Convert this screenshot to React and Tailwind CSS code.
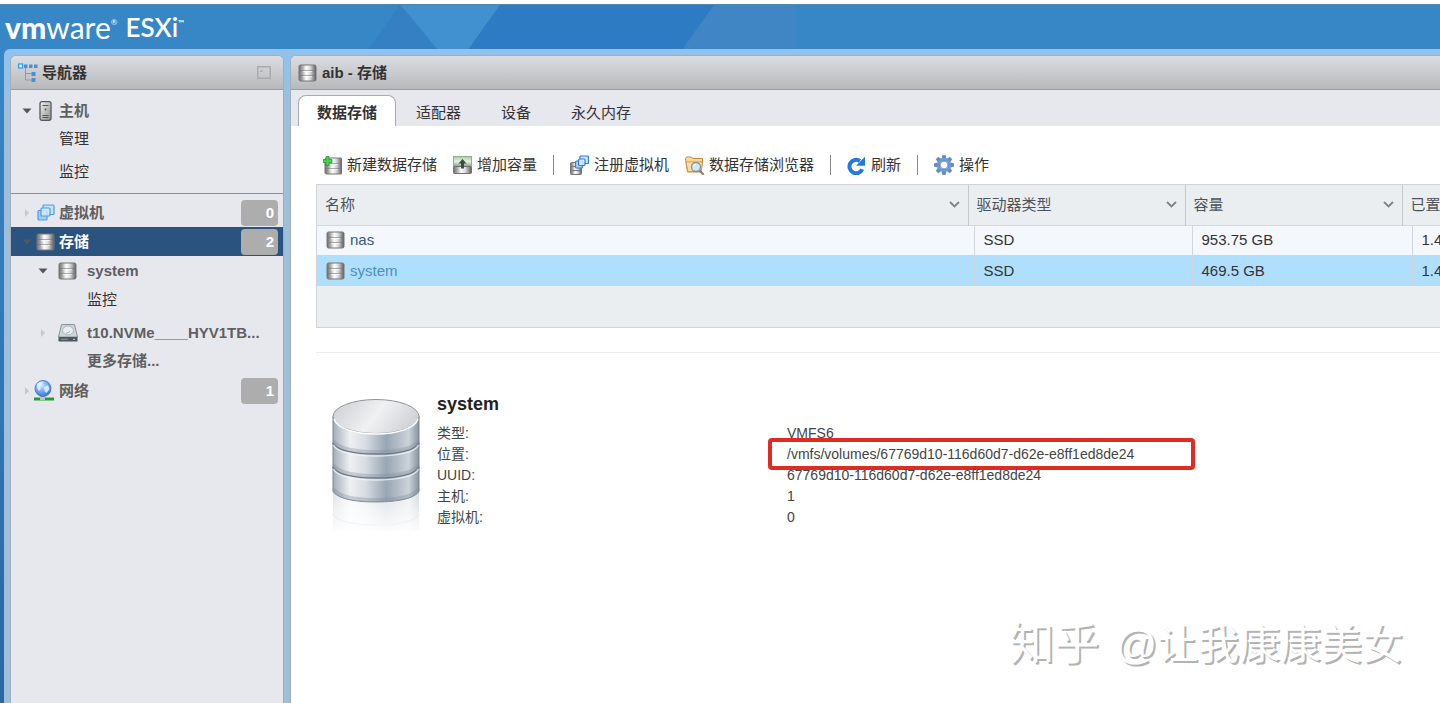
import { useState } from "react";

const TABS = ["数据存储", "适配器", "设备", "永久内存"];

const ROWS = [
  { name: "nas", drive: "SSD", capacity: "953.75 GB", used: "1.41 GB" },
  { name: "system", drive: "SSD", capacity: "469.5 GB", used: "1.43 GB" },
];

const DETAILS = [
  { label: "类型:", value: "VMFS6" },
  { label: "位置:", value: "/vmfs/volumes/67769d10-116d60d7-d62e-e8ff1ed8de24", marked: true },
  { label: "UUID:", value: "67769d10-116d60d7-d62e-e8ff1ed8de24" },
  { label: "主机:", value: "1" },
  { label: "虚拟机:", value: "0" },
];

// Gradients shared by all icons
function IconDefs() {
  return (
    <svg className="absolute w-0 h-0" aria-hidden="true">
      <defs>
        <linearGradient id="metal" x1="0" x2="1" y1="0" y2="0">
          <stop offset="0" stopColor="#6e6e6e" />
          <stop offset="0.2" stopColor="#a8a8a8" />
          <stop offset="0.42" stopColor="#ffffff" />
          <stop offset="0.65" stopColor="#dcdcdc" />
          <stop offset="1" stopColor="#5c5c5c" />
        </linearGradient>
        <linearGradient id="greenMetal" x1="0" x2="0" y1="0" y2="1">
          <stop offset="0" stopColor="#9ccfa0" />
          <stop offset="0.5" stopColor="#e4efe4" />
          <stop offset="1" stopColor="#8f9a90" />
        </linearGradient>
        <linearGradient id="server" x1="0" x2="1" y1="0" y2="1">
          <stop offset="0" stopColor="#f2f2f0" />
          <stop offset="1" stopColor="#8d8f8c" />
        </linearGradient>
        <linearGradient id="folder" x1="0" x2="0" y1="0" y2="1">
          <stop offset="0" stopColor="#fbe3a8" />
          <stop offset="1" stopColor="#e0a553" />
        </linearGradient>
        <radialGradient id="globe" cx="0.4" cy="0.3" r="0.8">
          <stop offset="0" stopColor="#d5ebff" />
          <stop offset="0.5" stopColor="#6fa8ee" />
          <stop offset="1" stopColor="#2f63c4" />
        </radialGradient>
        <linearGradient id="side" x1="0" x2="1" y1="0" y2="0">
          <stop offset="0" stopColor="#a3adb8" />
          <stop offset="0.2" stopColor="#eef1f4" />
          <stop offset="0.38" stopColor="#d6dce2" />
          <stop offset="0.62" stopColor="#98a5b3" />
          <stop offset="0.88" stopColor="#ccd3da" />
          <stop offset="1" stopColor="#8592a0" />
        </linearGradient>
        <linearGradient id="lid" x1="0" x2="1" y1="0.3" y2="0.6">
          <stop offset="0" stopColor="#cfd1d4" />
          <stop offset="0.5" stopColor="#f0f1f2" />
          <stop offset="1" stopColor="#cdd0d3" />
        </linearGradient>
        <linearGradient id="fade" x1="0" x2="0" y1="0" y2="1">
          <stop offset="0" stopColor="#ffffff" stopOpacity="0.65" />
          <stop offset="1" stopColor="#ffffff" stopOpacity="1" />
        </linearGradient>
      </defs>
    </svg>
  );
}

function Stack() {
  return (
    <g>
      <rect x="1" y="1" width="17" height="16" rx="1.5" fill="url(#metal)" stroke="#777" />
      <path d="M1.5 6.5h16M1.5 11.5h16" stroke="#6f6f6f" strokeOpacity="0.55" />
      <path d="M5 7.5h9M5 12.5h9" stroke="#fff" strokeOpacity="0.6" />
    </g>
  );
}

function StorageIcon() {
  return <svg className="w-[19px] h-[18px] shrink-0" viewBox="0 0 19 18"><Stack /></svg>;
}

function NewStorageIcon() {
  return (
    <svg className="w-[19px] h-[19px] shrink-0" viewBox="0 0 19 19">
      <g transform="translate(1 1)"><Stack /></g>
      <path d="M3 .5h3v3h3v3H6v3H3v-3H0v-3h3z" fill="#4bd04b" stroke="#2a9a35" strokeWidth="0.8" />
    </svg>
  );
}

function IncreaseIcon() {
  return (
    <svg className="w-[19px] h-[18px] shrink-0" viewBox="0 0 19 18">
      <rect x="0.5" y="0.5" width="18" height="10" fill="url(#greenMetal)" stroke="#8fae92" />
      <rect x="0.5" y="10.5" width="18" height="7" rx="1" fill="url(#metal)" stroke="#707070" />
      <path d="M9.5 3l4 4.500H11v5H8v-5H5.500z" fill="#3f4a42" />
    </svg>
  );
}

function VmIcon() {
  return (
    <svg className="w-[18px] h-[17px] shrink-0" viewBox="0 0 18 17">
      <g stroke="#4a9be0" strokeWidth="1.2">
        <rect x="6" y="1" width="11" height="9.500" rx="1" fill="#c4e3fb" />
        <rect x="1" y="6.500" width="9" height="9.500" rx="1" fill="#9bd0f8" />
        <rect x="4" y="4" width="9" height="8" rx="1" fill="#d9eefd" fillOpacity="0.75" />
      </g>
    </svg>
  );
}

function RegisterVmIcon() {
  return (
    <svg className="w-[19px] h-5 shrink-0" viewBox="0 0 19 20">
      <rect x="0.5" y="7.5" width="11" height="12" rx="1" fill="url(#metal)" stroke="#777" />
      <path d="M1 11.5h10M1 15.5h10" stroke="#777" />
      <g stroke="#2f7fdb" strokeWidth="1.2">
        <rect x="10" y="1" width="8.500" height="7.500" rx="1" fill="#c9e5fc" />
        <rect x="5.500" y="6" width="7" height="7" rx="1" fill="#a7d3fa" />
        <rect x="8.500" y="4" width="6.500" height="6.500" rx="1" fill="#e5f3fe" fillOpacity="0.8" />
      </g>
    </svg>
  );
}

function BrowserIcon() {
  return (
    <svg className="w-[19px] h-[19px] shrink-0" viewBox="0 0 19 19">
      <path d="M.5 2.500l1-1.500h5l1 1.500h10v4l-1.500 9.500H2.500L1 6.500z" fill="url(#folder)" stroke="#c58a3e" />
      <path d="M1 6h16.500l-1.500 9.500h-13z" fill="#fae0a2" stroke="#cd9548" strokeWidth="0.8" />
      <path d="M14 14l4 4" stroke="#8c7f78" strokeWidth="2.2" strokeLinecap="round" />
      <circle cx="11" cy="11" r="4.5" fill="#cfe6f7" stroke="#8294a6" strokeWidth="1.3" />
      <path d="M8.500 10.500a2.700 2.700 0 0 1 2.500-2.200" stroke="#fff" fill="none" />
    </svg>
  );
}

function RefreshIcon() {
  return (
    <svg className="w-[19px] h-[19px] shrink-0" viewBox="0 0 19 19">
      <path d="M15.300 13.200A6.700 6.700 0 1 1 13 5" fill="none" stroke="#2379dc" strokeWidth="4" />
      <path d="M18 .8v9H9z" fill="#2379dc" />
    </svg>
  );
}

function GearIcon() {
  return (
    <svg className="w-5 h-5 shrink-0" viewBox="0 0 20 20">
      <g fill="#5b88c6" stroke="#3f6aa8" strokeWidth="0.5">
        {[0, 45, 90, 135, 180, 225, 270, 315].map(a => (
          <path key={a} d="M8 4l.6-3.600h2.800L12 4z" transform={`rotate(${a} 10 10)`} />
        ))}
      </g>
      <circle cx="10" cy="10" r="5.6" fill="none" stroke="#6f9ad3" strokeWidth="3.2" />
      <circle cx="10" cy="10" r="3.9" fill="#fff" stroke="#456fae" strokeWidth="0.7" />
    </svg>
  );
}

function HostIcon() {
  return (
    <svg className="w-[13px] h-5 shrink-0" viewBox="0 0 13 20">
      <rect x="1" y="0.7" width="11" height="18.6" rx="2" fill="url(#server)" stroke="#55575a" strokeWidth="1.3" />
      <path d="M3.500 4.500h6M3.500 14.500h6M3.500 16.500h6" stroke="#555" />
      <circle cx="6.5" cy="8.5" r="0.9" fill="#555" />
    </svg>
  );
}

function DiskIcon() {
  return (
    <svg className="w-5 h-[18px] shrink-0" viewBox="0 0 20 18">
      <path d="M3.500.5h13l3 12.500H.5z" fill="#cdd6da" stroke="#8a9398" />
      <ellipse cx="10" cy="6.5" rx="5.5" ry="4.5" fill="#e8eef1" stroke="#a9b5bb" />
      <path d="M8 9.500l4-2" stroke="#a2afb5" />
      <rect x="0.5" y="13" width="19" height="4.5" rx="0.5" fill="#4d575d" />
      <path d="M3 15.300h7" stroke="#8c979d" />
      <path d="M15 15.300h2" stroke="#b7e07a" />
    </svg>
  );
}

function NetworkIcon() {
  return (
    <svg className="w-5 h-[21px] shrink-0" viewBox="0 0 20 21">
      <path d="M0 19h20" stroke="#22a025" strokeWidth="3" />
      <path d="M6 16h5v4H6z" fill="#b8c4cd" />
      <circle cx="9" cy="8.5" r="8" fill="url(#globe)" stroke="#3d6fc5" strokeWidth="0.8" />
      <path d="M3 4c2-2 4-2.500 6-2l-1 3-2 1 1 2-2 3-2-3zM10 7l4-2 1.500 4-3 4-2-2z" fill="#e2f2ff" fillOpacity="0.85" />
    </svg>
  );
}

function NavigatorIcon() {
  return (
    <svg className="w-5 h-5 shrink-0" viewBox="0 0 20 20">
      <path d="M7.500 5v12h6M7.500 10.500h6" fill="none" stroke="#8b97a5" />
      <rect x="0.6" y="1" width="4" height="4" fill="#d9f0ff" stroke="#2d9bea" strokeWidth="1.2" />
      <path d="M6 1.500h3.500V5H6zM11 1.500h3.500V5H11zM16 1.500h3.500V5H16zM13.500 9h4v4h-4zM13.500 15h4v4h-4z" fill="#4a8fd6" />
    </svg>
  );
}

function Arrow({ open, faint }) {
  return (
    <svg className="w-[10px] h-[10px] shrink-0" viewBox="0 0 10 10">
      <path d={open ? "M.5 2.500h9L5 7.500z" : "M3 1l4 4-4 4z"} fill={open ? (faint ? "#4c5a68" : "#555") : "#c6c7cc"} />
    </svg>
  );
}

function BigStorage() {
  return (
    <svg className="w-[88px] h-[137px] shrink-0" viewBox="0 0 88 137">
      {/* reflection */}
      <path d="M1 93v40h86V93c-2 8-20 12-43 12S3 101 1 93z" fill="url(#side)" />
      <path d="M1 116c3 7 20 11 43 11s40-4 43-11" fill="none" stroke="#75808c" strokeWidth="1.5" />
      <rect x="0" y="92" width="88" height="45" fill="url(#fade)" />

      <path d="M1 18v75c3 7 20 11 43 11s40-4 43-11V18z" fill="url(#side)" stroke="#7d858e" />
      {/* shade at the lower edge of each band, highlight at the upper edge of the next */}
      <path d="M1.500 43c3 7 20 11 42.500 11s39.500-4 42.500-11M1.500 67c3 7 20 11 42.500 11s39.500-4 42.500-11M1.500 91c3 7 20 11 42.500 11s39.500-4 42.500-11" fill="none" stroke="#7f8c9a" strokeOpacity="0.35" strokeWidth="4" />
      <path d="M1 45c3 7 20 11 43 11s40-4 43-11M1 69c3 7 20 11 43 11s40-4 43-11" fill="none" stroke="#6f7a86" strokeWidth="1.5" />
      <path d="M1.500 47c3 7 20 11 42.500 11s39.500-4 42.500-11M1.500 71c3 7 20 11 42.500 11s39.500-4 42.500-11" fill="none" stroke="#f4f7f9" strokeOpacity="0.75" strokeWidth="1.5" />
      <ellipse cx="44" cy="18.5" rx="43" ry="17" fill="url(#lid)" stroke="#8e959c" />
      <path d="M2 21c3 9 20 15 42 15s39-6 42-15" fill="none" stroke="#fff" strokeWidth="1.5" />
    </svg>
  );
}

const TOOLS = [
  { label: "新建数据存储", icon: NewStorageIcon },
  { label: "增加容量", icon: IncreaseIcon },
  null,
  { label: "注册虚拟机", icon: RegisterVmIcon },
  { label: "数据存储浏览器", icon: BrowserIcon },
  null,
  { label: "刷新", icon: RefreshIcon },
  null,
  { label: "操作", icon: GearIcon },
];

function Badge({ children }) {
  return (
    <span className="ml-auto mr-[5px] w-[37px] h-[26px] rounded bg-[#adadad] text-white font-bold flex items-center justify-end pr-1">
      {children}
    </span>
  );
}

function Header() {
  return (
    <header className="relative h-[45px] mt-1 bg-[#3786c6] border-t border-[#4c86b5] overflow-hidden flex">
      <svg className="absolute left-[360px] top-0 w-[480px] h-[45px]" viewBox="0 0 480 45" aria-hidden="true">
        <path d="M40 0L8 45h70z" fill="#3480c2" />
        <path d="M41 0h99l-32 45H78z" fill="#4191d1" />
        <path d="M140 0h214l-32 45H108z" fill="#2c7bc3" />
        <path d="M354 0h82v45H322z" fill="#4085c4" />
      </svg>
      <h1 className="relative pl-[5px] text-white flex items-center gap-2 font-[Lato]">
        <span className="text-[30px] leading-10">
          <span className="font-black">vm</span>ware<sup className="text-[8px] -top-[14px]">®</sup>
        </span>
        <span className="text-[26px] leading-10 font-semibold">ESXi<sup className="text-[8px] -top-[11px]">™</sup></span>
      </h1>
    </header>
  );
}

function Sidebar() {
  const row = "h-[29px] flex items-center";
  return (
    <aside className="w-[274px] shrink-0 rounded-t-md bg-[#e7e8ee] border-x border-t border-[#a5adb8] overflow-hidden">
      <div className="h-[34px] pl-[7px] pr-3 flex items-center gap-1 bg-linear-to-b from-[#dcdde0] to-[#b8b9bd] border-b border-[#999ba1]">
        <NavigatorIcon />
        <h2 className="font-bold text-[#333]">导航器</h2>
        <button aria-label="收起" className="ml-auto">
          <svg className="w-[14px] h-[13px]" viewBox="0 0 14 13">
            <path d="M.7.7h12.600v11.600H.7z" fill="none" stroke="#aaa" strokeWidth="1.4" />
            <path d="M5.500 3v3H2.500z" fill="#aaa" />
          </svg>
        </button>
      </div>
      <nav className="text-[#5f5f5f]">
        <div className="pt-[6px] pb-[7px] border-b border-[#8d8f96]">
          <div className={`${row} pl-[11px]`}>
            <Arrow open />
            <span className="w-[27px] flex justify-center"><HostIcon /></span>
            <a href="#host" className="font-bold">主机</a>
          </div>
          <div className="h-7 pl-12 flex items-center text-[#333]"><a href="#manage">管理</a></div>
          <div className="mt-1 h-[29px] pl-12 flex items-center text-[#333]"><a href="#monitor">监控</a></div>
        </div>
        <div className={`${row} mt-1 pl-[11px]`}>
          <Arrow />
          <span className="w-[27px] flex justify-center"><VmIcon /></span>
          <a href="#vms" className="font-bold">虚拟机</a>
          <Badge>0</Badge>
        </div>
        <div className={`${row} pl-[11px] bg-[#2a5380] text-white`}>
          <Arrow open faint />
          <span className="w-[27px] flex justify-center"><StorageIcon /></span>
          <a href="#storage" className="font-bold">存储</a>
          <Badge>2</Badge>
        </div>
        <div className={`${row} pl-[27px]`}>
          <Arrow open />
          <span className="w-[39px] flex justify-center"><StorageIcon /></span>
          <a href="#system" className="font-bold">system</a>
        </div>
        <div className={`${row} pl-[76px] text-[#333]`}><a href="#system-monitor">监控</a></div>
        <div className={`${row} mt-1 pl-[27px]`}>
          <Arrow />
          <span className="w-[39px] flex justify-center"><DiskIcon /></span>
          <a href="#nvme" className="font-bold">t10.NVMe____HYV1TB...</a>
        </div>
        <div className="h-[27px] pl-[76px] flex items-center"><a href="#more" className="font-bold">更多存储...</a></div>
        <div className={`${row} mt-[2px] pl-[11px]`}>
          <Arrow />
          <span className="w-[27px] pl-[2px]"><NetworkIcon /></span>
          <a href="#network" className="font-bold">网络</a>
          <Badge>1</Badge>
        </div>
      </nav>
    </aside>
  );
}

function Grid() {
  const [selected, setSelected] = useState("system");
  const cell = "border-l border-[#cfd6dd] pl-[9px]";
  return (
    <div className="overflow-hidden border-y border-l border-[#d0d3d7] bg-[#ebeef1]">
      <table className="table-fixed w-[1290px] border-collapse text-left">
        <colgroup>
          <col className="w-[651px]" /><col className="w-[217px]" /><col className="w-[217px]" /><col />
        </colgroup>
        <thead>
          <tr className="h-10 text-[#4d5359] border-b border-[#d5d8dc]">
            {["名称", "驱动器类型", "容量", "已置备"].map((h, i) => (
              <th key={h} scope="col" className={`font-normal pl-2 ${i ? "border-l border-[#c5c8cc]" : ""}`}>
                <div className="flex items-center justify-between pr-2">
                  {h}
                  <svg className="w-[11px] h-[7px]" viewBox="0 0 11 7">
                    <path d="M1 1l4.500 4.500L10 1" fill="none" stroke="#7d8288" strokeWidth="1.8" />
                  </svg>
                </div>
              </th>
            ))}
          </tr>
        </thead>
      </table>
      <table className="table-fixed w-[1290px] border-collapse text-[#333]">
        <colgroup>
          <col className="w-[657px]" /><col className="w-[218px]" /><col className="w-[220px]" /><col />
        </colgroup>
        <tbody>
          {ROWS.map(r => (
            <tr
              key={r.name}
              onClick={() => setSelected(r.name)}
              className={`h-[30px] border-b border-[#c9d5df] ${r.name === selected ? "bg-[#b0dffd]" : "bg-[#f4f7fc]"}`}
            >
              <td className="pl-[9px]">
                <div className="flex items-center gap-[5px]">
                  <StorageIcon />
                  <a href={`#${r.name}`} className={r.name === selected ? "text-[#4a90c4]" : "text-[#34587f]"}>{r.name}</a>
                </div>
              </td>
              <td className={cell}>{r.drive}</td>
              <td className={cell}>{r.capacity}</td>
              <td className={cell}>{r.used}</td>
            </tr>
          ))}
        </tbody>
      </table>
      <div className="h-[41px]" />
    </div>
  );
}

export default function App() {
  const [tab, setTab] = useState(TABS[0]);

  return (
    <div className="relative min-h-screen overflow-hidden flex flex-col bg-white text-[15px] leading-5 font-['Liberation_Sans','Noto_Sans_CJK_SC',sans-serif]">
      <IconDefs />
      <Header />

      <div className="flex-1 flex pl-1 bg-linear-to-b from-[#3786c6] to-[#2b67a3]">
        <div className="flex-1 min-w-0 flex gap-[6px] pt-[6px] pl-[6px] rounded-tl-md bg-linear-to-b from-[#8fc2ee] to-[#9dbfda] to-10%">
          <Sidebar />

          <main className="flex-1 min-w-0 bg-white rounded-tl-md border-l border-t border-[#a5adb8] overflow-hidden">
            <div className="h-[34px] pl-[7px] flex items-center gap-[5px] bg-linear-to-b from-[#dcdde0] to-[#b8b9bd] border-b border-[#999ba1]">
              <StorageIcon />
              <h2 className="font-bold text-[#333]">aib - 存储</h2>
            </div>

            {/* Tabs */}
            <div role="tablist" className="h-9 pl-[7px] pt-[5px] flex bg-[#e7e8ee] text-[#333]">
              {TABS.map(t => (
                <button
                  key={t}
                  role="tab"
                  aria-selected={t === tab}
                  onClick={() => setTab(t)}
                  className={t === tab
                    ? "px-[18px] pt-1 font-bold bg-white rounded-t-lg border-x border-t border-[#a9abb3]"
                    : "px-5 pt-1"}
                >
                  {t}
                </button>
              ))}
            </div>

            <div className="pl-[25px]">
              {/* Toolbar */}
              <div className="pt-[25px] pb-[5px] pl-[7px] flex items-center gap-4 text-[#333]">
                {TOOLS.map((t, i) => t ? (
                  <button key={t.label} className="h-7 flex items-center gap-[5px] whitespace-nowrap">
                    <t.icon />
                    {t.label}
                  </button>
                ) : (
                  <span key={i} className="w-px h-5 bg-[#8a8a8a]" />
                ))}
              </div>

              <Grid />

              {/* Selected datastore */}
              <section className="mt-6 pt-[45px] flex items-start gap-[17px] border-t border-[#ebebeb]">
                <div className="pl-4"><BigStorage /></div>
                <div className="flex-1 -mt-[6px]">
                  <h3 className="text-lg leading-6 mb-[7px] font-bold text-[#222]">system</h3>
                  <dl className="text-[14px] leading-[21px] text-[#444]">
                    {DETAILS.map(d => (
                      <div key={d.label} className="flex">
                        <dt className="w-[350px]">{d.label}</dt>
                        <dd className="relative">
                          {d.value}
                          {d.marked && (
                            <span className="absolute -left-[19px] -top-[6px] w-[427px] h-8 rounded border-4 border-[#e02b20]" />
                          )}
                        </dd>
                      </div>
                    ))}
                  </dl>
                </div>
              </section>
            </div>
          </main>
        </div>
      </div>

      <p className="absolute right-[37px] bottom-7 flex items-center gap-4 text-[41px] leading-[60px] text-white text-shadow-[2px_2px_0px_#b3b3b3]">
        <span className="text-[45px]">知乎</span>
        <span>@让我康康美女</span>
      </p>
    </div>
  );
}
